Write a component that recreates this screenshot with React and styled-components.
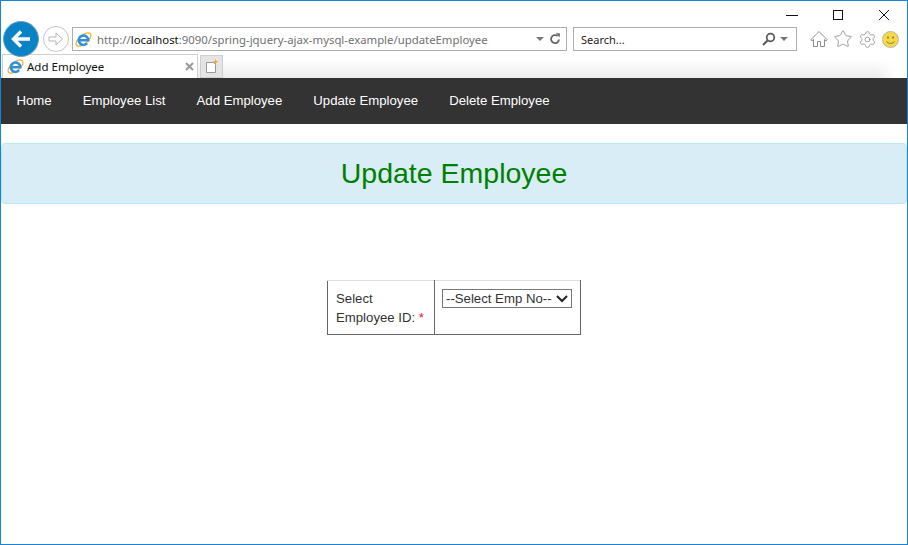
import React from 'react';
import styled, { createGlobalStyle } from 'styled-components';
import { Star, Settings } from 'lucide-react';

const GlobalStyle = createGlobalStyle`
    html, body {
        margin: 0;
        padding: 0;
        background: #fff;
    }
    * {
        box-sizing: border-box;
    }
`;

const Window = styled.div`
    width: 908px;
    height: 545px;
    border: 1px solid #1683d8;
    overflow: hidden;
    background: #fff;
    font-family: "Liberation Sans", Arial, sans-serif;
    color: #333;
`;

const TitleBar = styled.div`
    height: 19px;
    display: flex;
    justify-content: flex-end;
`;

const WindowButton = styled.div`
    width: 46px;
    height: 28px;
    display: flex;
    align-items: center;
    justify-content: center;
    flex: none;
`;

const Toolbar = styled.div`
    height: 34px;
    display: flex;
    align-items: flex-start;
    padding-left: 2px;
    position: relative;
    z-index: 2;
`;

const BackButton = styled.div`
    width: 36px;
    height: 36px;
    margin-top: 1px;
    border-radius: 50%;
    background: #0a83c6;
    border: 1px solid #6c9fbd;
    display: flex;
    align-items: center;
    justify-content: center;
    flex: none;
`;

const ForwardButton = styled.div`
    width: 26px;
    height: 26px;
    margin: 6px 3px 0 4px;
    border-radius: 50%;
    border: 1px solid #c4c4c4;
    display: flex;
    align-items: center;
    justify-content: center;
    flex: none;
`;

const Field = styled.div`
    height: 24px;
    margin-top: 7px;
    width: ${props => props.width}px;
    margin-right: ${props => props.gap || 0}px;
    border: 1px solid #aeaeae;
    display: flex;
    align-items: center;
    flex: none;
    font-size: 12px;
    background: #fff;
    padding-left: ${props => props.inset || 0}px;
`;

const AddressText = styled.span`
    color: #707070;
    margin-left: 5px;
    white-space: nowrap;
    font-family: "Noto Sans", "Liberation Sans", sans-serif;
    font-size: 11.37px;

    b {
        color: #111;
        font-weight: 400;
    }
`;

const SearchText = styled.span`
    color: #222;
    margin-left: 7px;
    font-family: "Noto Sans", "Liberation Sans", sans-serif;
    font-size: 11px;
`;

const FieldIcons = styled.div`
    margin-left: auto;
    display: flex;
    align-items: center;
    gap: ${props => props.gap}px;
    padding-right: ${props => props.pad}px;
`;

const Caret = styled.span`
    width: 0;
    height: 0;
    border-left: 4px solid transparent;
    border-right: 4px solid transparent;
    border-top: 4px solid #777;
`;

const Tools = styled.div`
    display: flex;
    align-items: center;
    gap: 5px;
    margin: 9px 0 0 13px;
    color: #8c8c8c;
`;

const TabRow = styled.div`
    height: 24px;
    display: flex;
    padding-left: 1px;
    background:
        linear-gradient(to right, rgba(255, 255, 255, 0) 97.5%, #fff 100%),
        linear-gradient(to bottom, #fff, #fff 20%, #ececec);
    margin-right: 10px;
`;

const Tab = styled.div`
    width: 196px;
    height: 24px;
    background: #fff;
    border: 1px solid #cfcfcf;
    border-bottom: none;
    display: flex;
    align-items: center;
    padding: 0 3px 0 4px;
    gap: 3px;
    font-family: "Noto Sans", "Liberation Sans", sans-serif;
    font-size: 11.5px;
    color: #111;
`;

const TabClose = styled.span`
    margin-left: auto;
    display: flex;
    padding-right: 0;
`;

const NewTab = styled.div`
    width: 23px;
    height: 23px;
    margin: 1px 0 0 2px;
    background: #e4e4e4;
    border: 1px solid #cfcfcf;
    display: flex;
    align-items: center;
    justify-content: center;
`;

const NavBar = styled.nav`
    height: 46px;
    background: #333;
    display: flex;
`;

const NavLink = styled.a`
    display: flex;
    align-items: center;
    padding: 0 15.5px 1px;
    color: #fff;
    font-size: 13.2px;
    white-space: nowrap;
`;

const Banner = styled.div`
    height: 61px;
    margin-top: 19px;
    background: #d9edf7;
    border: 1px solid #bce8f1;
    border-radius: 4px;
    display: flex;
    align-items: center;
    justify-content: center;
`;

const Heading = styled.h2`
    margin: 0;
    font-size: 28.5px;
    font-weight: 400;
    color: #008000;
`;

const FormTable = styled.table`
    margin: 76px auto 0;
    width: 254px;
    border-collapse: collapse;
    font-size: 13.2px;
    line-height: 19px;

    td {
        height: 53px;
        padding: 8px 8px 7px;
        vertical-align: top;
        border: 1px solid #666;
        border-top-color: #ddd;
    }
`;

const LabelCell = styled.td`
    width: 108px;
`;

const Required = styled.span`
    color: #e01010;
`;

const EmpSelect = styled.select`
    width: 130px;
    height: 19px;
    margin: 0 0 0 -1px;
    padding: 0 0 0 3px;
    appearance: none;
    font-family: "Liberation Sans", Arial, sans-serif;
    font-size: 13.2px;
    color: #333;
    background: #fff url("data:image/svg+xml,%3Csvg xmlns='http://www.w3.org/2000/svg' width='12' height='8'%3E%3Cpath d='M1 1l5 5 5-5' fill='none' stroke='%23222' stroke-width='2'/%3E%3C/svg%3E") no-repeat right 3px center;
    border: 1px solid #767676;
    border-radius: 0;
    display: block;
`;

const IeLogo = ({ size }) => (
    <svg width={size} height={size} viewBox="0 0 18 18">
        <ellipse cx="9" cy="9" rx="9.500" ry="4.600" transform="rotate(-40 9 9)" fill="none" stroke="#eeb32c" strokeWidth="1.300" />
        <path d="M4.300 9.800H14A5 5 0 1 0 12.800 13" fill="none" stroke="#2f8fdc" strokeWidth="2.700" />
    </svg>
);

const App = () => {
    const links = ['Home', 'Employee List', 'Add Employee', 'Update Employee', 'Delete Employee'];

    return (
        <Window>
            <GlobalStyle />
            <TitleBar>
                <WindowButton>
                    <svg width="12" height="12" viewBox="0 0 12 12"><path d="M0 6.500h12" stroke="#111" /></svg>
                </WindowButton>
                <WindowButton>
                    <svg width="12" height="12" viewBox="0 0 12 12"><rect x="1.500" y="1.500" width="9" height="9" fill="none" stroke="#111" /></svg>
                </WindowButton>
                <WindowButton>
                    <svg width="12" height="12" viewBox="0 0 12 12"><path d="M1 1l10 10M11 1L1 11" stroke="#111" /></svg>
                </WindowButton>
            </TitleBar>
            <Toolbar>
                <BackButton>
                    <svg width="24" height="24" viewBox="0 0 24 24">
                        <path d="M21 12H5M12 4.500L4.500 12l7.500 7.500" fill="none" stroke="#fff" strokeWidth="3.400" />
                    </svg>
                </BackButton>
                <ForwardButton>
                    <svg width="18" height="18" viewBox="0 0 18 18">
                        <path d="M2 7h7V3l6.500 6L9 15v-4H2z" fill="none" stroke="#b5b5b5" />
                    </svg>
                </ForwardButton>
                <Field width={495} gap={6} inset={2}>
                    <IeLogo size={17} />
                    <AddressText>http://<b>localhost</b>:9090/spring-jquery-ajax-mysql-example/updateEmployee</AddressText>
                    <FieldIcons gap={5} pad={5}>
                        <Caret />
                        <svg width="12" height="12" viewBox="0 0 12 12">
                            <path d="M10 6.500A4 4 0 1 1 8.500 3" fill="none" stroke="#666" strokeWidth="1.800" />
                            <path d="M7 0l4 .5-.5 4z" fill="#666" />
                        </svg>
                    </FieldIcons>
                </Field>
                <Field width={224}>
                    <SearchText>Search...</SearchText>
                    <FieldIcons gap={4} pad={8}>
                        <svg width="14" height="14" viewBox="0 0 14 14">
                            <circle cx="8.500" cy="5.500" r="3.800" fill="none" stroke="#555" strokeWidth="1.700" />
                            <path d="M5.500 8.500L1 13" stroke="#555" strokeWidth="2" />
                        </svg>
                        <Caret />
                    </FieldIcons>
                </Field>
                <Tools>
                    <svg width="18" height="18" viewBox="0 0 18 18">
                        <path d="M9 1.500L.8 9.700l1.200 1.100 1.500-1.400v7.100h4v-5h3v5h4V9.400l1.500 1.400 1.200-1.100z" fill="none" stroke="currentColor" strokeLinejoin="round" />
                    </svg>
                    <Star size={20} strokeWidth={1} />
                    <Settings size={19} strokeWidth={1} />
                    <svg width="17" height="17" viewBox="0 0 17 17">
                        <circle cx="8.500" cy="8.500" r="8" fill="#f6d74a" stroke="#b8b8a0" />
                        <ellipse cx="6" cy="6.500" rx="0.800" ry="1.300" fill="#8a7a20" />
                        <ellipse cx="11" cy="6.500" rx="0.800" ry="1.300" fill="#8a7a20" />
                        <path d="M4.500 10.500c1.500 2.500 6.500 2.500 8 0" fill="none" stroke="#8a7a20" />
                    </svg>
                </Tools>
            </Toolbar>
            <TabRow>
                <Tab>
                    <IeLogo size={17} />
                    Add Employee
                    <TabClose>
                        <svg width="9" height="9" viewBox="0 0 9 9"><path d="M1 1l7 7M8 1L1 8" stroke="#999" strokeWidth="2" /></svg>
                    </TabClose>
                </Tab>
                <NewTab>
                    <svg width="15" height="15" viewBox="0 0 15 15">
                        <path d="M2.500 3.500h7l2 2v8h-9z" fill="#fff" stroke="#999" />
                        <path d="M11.500 0l.8 2 2 .8-2 .8-.8 2-.8-2-2-.8 2-.8z" fill="#f2a71e" />
                    </svg>
                </NewTab>
            </TabRow>
            <NavBar>
                {links.map(link => <NavLink key={link}>{link}</NavLink>)}
            </NavBar>
            <Banner>
                <Heading>Update Employee</Heading>
            </Banner>
            <FormTable>
                <tbody>
                    <tr>
                        <LabelCell>Select Employee ID: <Required>*</Required></LabelCell>
                        <td>
                            <EmpSelect defaultValue="">
                                <option value="">--Select Emp No--</option>
                            </EmpSelect>
                        </td>
                    </tr>
                </tbody>
            </FormTable>
        </Window>
    );
};

export default App;
